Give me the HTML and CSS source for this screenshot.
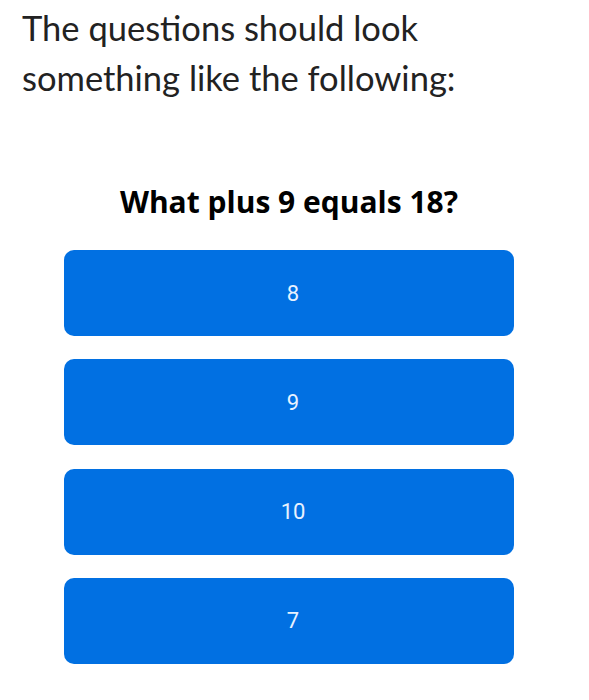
FILE: index.html
```html
<!DOCTYPE html>
<html>
<head>
<meta charset="utf-8">
<link rel="stylesheet" href="styles.css">
</head>
<body>
<p class="intro">The questions should look<br>something like the following:</p>
<section class="quiz">
  <h2 class="question">What plus 9 equals 18?</h2>
  <div class="answers">
    <button class="answer">8</button>
    <button class="answer">9</button>
    <button class="answer">10</button>
    <button class="answer">7</button>
  </div>
</section>
</body>
</html>
```

FILE: styles.css
```css
html, body {
  margin: 0;
  padding: 0;
  background: #ffffff;
}
body {
  width: 589px;
  height: 700px;
  overflow: hidden;
}
.intro {
  margin: 0;
  padding: 3px 0 0 22px;
  font-family: Lato, "Liberation Sans", sans-serif;
  font-size: 34.5px;
  line-height: 50px;
  color: #222222;
}
.quiz {
  padding: 0 75px 0 64px;
}
.question {
  margin: 79px 0 0 0;
  font-family: "Open Sans", "Liberation Sans", sans-serif;
  font-weight: 700;
  font-size: 30px;
  line-height: 40px;
  text-align: center;
  color: #000000;
}
.answers {
  display: flex;
  flex-direction: column;
  gap: 23.3px;
  margin-top: 28px;
}
.answer {
  height: 86px;
  border: none;
  border-radius: 10px;
  background: #0170e2;
  color: #e8f2ff;
  font-family: Roboto, "Liberation Sans", sans-serif;
  font-size: 22px;
  padding: 0 0 0 8px;
}
```
